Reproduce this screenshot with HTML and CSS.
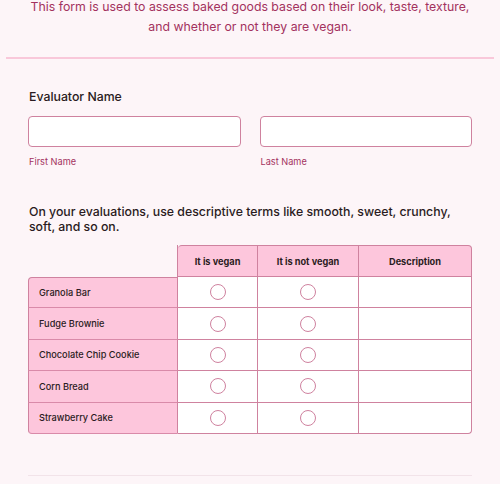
FILE: index.html
```html
<!DOCTYPE html>
<html lang="en">
<head>
  <meta charset="UTF-8" />
  <meta name="viewport" content="width=device-width, initial-scale=1.0" />
  <title>Baked Goods Evaluation</title>
  <link rel="stylesheet" href="styles.css">
</head>
<body>
  <div class="intro">
    <p>This form is used to assess baked goods based on their look, taste, texture, and whether or not they are vegan.</p>
  </div>

  <div class="form">
    <div class="section">
      <h3>Evaluator Name</h3>
      <div class="name-row">
        <div class="field">
          <input type="text" id="firstName">
          <label for="firstName">First Name</label>
        </div>
        <div class="field">
          <input type="text" id="lastName">
          <label for="lastName">Last Name</label>
        </div>
      </div>
    </div>

    <div class="section">
      <h3 class="question">On your evaluations, use descriptive terms like smooth, sweet, crunchy, soft, and so on.</h3>
      <table class="matrix">
        <tr>
          <th class="blank"></th>
          <th class="first">It is vegan</th>
          <th class="second">It is not vegan</th>
          <th class="last">Description</th>
        </tr>
        <tr class="top">
          <td class="item">Granola Bar</td>
          <td><span class="radio"></span></td>
          <td><span class="radio"></span></td>
          <td></td>
        </tr>
        <tr>
          <td class="item">Fudge Brownie</td>
          <td><span class="radio"></span></td>
          <td><span class="radio"></span></td>
          <td></td>
        </tr>
        <tr>
          <td class="item">Chocolate Chip Cookie</td>
          <td><span class="radio"></span></td>
          <td><span class="radio"></span></td>
          <td></td>
        </tr>
        <tr>
          <td class="item">Corn Bread</td>
          <td><span class="radio"></span></td>
          <td><span class="radio"></span></td>
          <td></td>
        </tr>
        <tr class="bottom">
          <td class="item">Strawberry Cake</td>
          <td><span class="radio"></span></td>
          <td><span class="radio"></span></td>
          <td></td>
        </tr>
      </table>
    </div>

    <div class="footer-line"></div>
  </div>
</body>
</html>
```

FILE: styles.css
```css
:root {
  --bg: #fdf5f8;
  --accent: #a3325e;
  --pink: #fdc6dc;
  --line: #cf829f;
  --text: #2a1b21;
}

body {
  margin: 0;
  background: var(--bg);
  font-family: Inter, 'Noto Sans', sans-serif;
  color: var(--text);
}

.intro {
  margin: -3px 6px 0;
  padding: 0 20px 21px;
  border-bottom: 2px solid #f9c8da;
  text-align: center;
}

.intro p {
  margin: 0;
  font-size: 12.3px;
  line-height: 19.5px;
  color: var(--accent);
}

.form {
  width: 444px;
  margin: 0 auto;
}

.section {
  padding-top: 30px;
}

h3 {
  margin: 0 0 11px;
  padding-left: 1px;
  font-size: 12.3px;
  font-weight: 500;
  line-height: 16px;
}

.name-row {
  display: flex;
  gap: 19px;
}

.field {
  flex: 1;
}

.field input {
  display: block;
  box-sizing: border-box;
  width: 100%;
  height: 31px;
  margin: 0;
  border: 1px solid var(--line);
  border-radius: 4px;
  background: #fff;
}

.field label {
  display: block;
  margin-top: 9px;
  padding-left: 1px;
  font-size: 9.2px;
  line-height: 12px;
  color: var(--accent);
}

.question {
  margin-top: 6px;
  margin-bottom: 11px;
  line-height: 15px;
}

.matrix {
  width: 444px;
  border-collapse: separate;
  border-spacing: 0;
  table-layout: fixed;
  font-size: 9.2px;
  font-weight: 500;
}

.matrix th,
.matrix td {
  box-sizing: border-box;
  height: 31.4px;
  padding: 0;
  border-right: 1px solid var(--line);
  border-bottom: 1px solid var(--line);
  text-align: center;
}

.matrix th {
  height: 32px;
  background: var(--pink);
  border-top: 1px solid var(--line);
}

.matrix th.blank {
  width: 150px;
  background: none;
  border: none;
  border-right: 1px solid var(--line);
}

.matrix th.first {
  width: 80px;
  border-top-left-radius: 4px;
}

.matrix th.second {
  width: 101px;
}

.matrix th.last {
  border-top-right-radius: 4px;
}

.matrix td {
  background: #fff;
}

.matrix td.item {
  padding-left: 10px;
  text-align: left;
  background: var(--pink);
  border-left: 1px solid var(--line);
  border-bottom-color: #d98aa9;
}

.matrix tr.top td.item {
  border-top: 1px solid var(--line);
  border-top-left-radius: 4px;
}

.matrix tr.bottom td.item {
  border-bottom-left-radius: 4px;
}

.matrix tr.bottom td:last-child {
  border-bottom-right-radius: 4px;
}

.radio {
  display: inline-block;
  width: 14px;
  height: 14px;
  border: 1px solid var(--line);
  border-radius: 50%;
  background: #fff;
  vertical-align: middle;
}

.footer-line {
  margin-top: 41px;
  border-top: 1px solid #f2e3e9;
}
```
